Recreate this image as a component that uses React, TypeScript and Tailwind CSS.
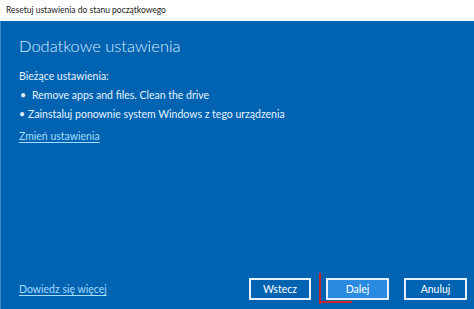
export default function App() {
  const font = { fontFamily: 'Lato, "Noto Sans", sans-serif' };
  return (
    <div className="w-[474px] h-[309px] flex flex-col overflow-hidden bg-[#0063b1]" style={font}>
      <div className="h-[21px] bg-white flex items-center pl-[6px] text-[8.5px] text-[#1a1a1a] leading-none">
        Resetuj ustawienia do stanu początkowego
      </div>
      <div className="flex-1 flex flex-col relative border-l border-[#3d86c4]">
        <div className="pl-[18px] pt-[13px] flex flex-col text-[#e6f2ff]">
          <h1 className="text-[16.5px] leading-[24px] font-light text-[#d4ecff]">Dodatkowe ustawienia</h1>
          <div className="mt-[11px] text-[10.5px] leading-[15px]">Bieżące ustawienia:</div>
          <div className="mt-[4px] text-[10.5px] leading-[15px] flex gap-[6px] pl-[1px]">
            <span>•</span>
            <span>Remove apps and files. Clean the drive</span>
          </div>
          <div className="mt-[4px] text-[10.5px] leading-[15px] flex gap-[3px]">
            <span>•</span>
            <span>Zainstaluj ponownie system Windows z tego urządzenia</span>
          </div>
          <a className="mt-[7px] text-[10.5px] leading-[15px] text-[#a6dcff] underline underline-offset-2 self-start">
            Zmień ustawienia
          </a>
        </div>
        <div className="mt-auto mb-[9px] flex items-center justify-between pl-[18px] pr-[7px]">
          <a className="text-[10.5px] leading-[15px] text-[#a6dcff] underline underline-offset-2">Dowiedz się więcej</a>
          <div className="flex gap-[15px]">
            <button className="w-[62px] h-[22px] border-2 border-[#e3f1ff] text-[10.5px] text-white leading-none">Wstecz</button>
            <button className="w-[63px] h-[22px] border-2 border-[#e3f1ff] bg-[#2a8ae0] text-[10.5px] text-white leading-none">Dalej</button>
            <button className="w-[63px] h-[22px] border-2 border-[#e3f1ff] text-[10.5px] text-white leading-none">Anuluj</button>
          </div>
        </div>
        <div className="absolute left-[318px] top-[252px] w-[2px] h-[31px] bg-[#c8252f]" />
        <div className="absolute left-[318px] top-[280px] w-[33px] h-[2px] bg-[#c8252f]" />
      </div>
    </div>
  );
}
